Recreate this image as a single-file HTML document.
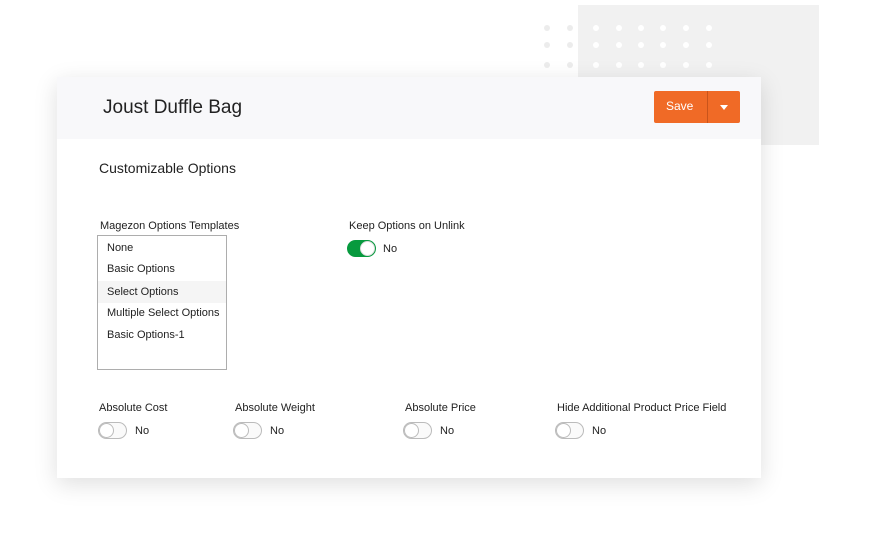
<!DOCTYPE html>
<html><head><meta charset="utf-8"><style>
*{margin:0;padding:0;box-sizing:border-box}
body{width:873px;height:539px;background:#fff;position:relative;overflow:hidden;font-family:"Liberation Sans",sans-serif;color:#222;font-size:11px}
.gray{position:absolute;left:578px;top:5px;width:241px;height:140px;background:#f1f1f1}
.dot{position:absolute;width:6px;height:6px;border-radius:50%}
.card{position:absolute;left:57px;top:77px;width:704px;height:401px;background:#fff;box-shadow:0 6px 22px rgba(0,0,0,0.13)}
.hdr{position:absolute;left:0;top:0;width:704px;height:62px;background:#f8f8fa}
.title{position:absolute;left:46px;top:20px;font-size:19px;color:#222}
.save{position:absolute;left:597px;top:14px;width:86px;height:32px;background:#f06a26;border-radius:2px;color:#fff;font-size:12px}
.save span{position:absolute;left:12px;top:8px}
.save .div{position:absolute;left:53px;top:0;width:1px;height:32px;background:#c9541b}
.save .tri{position:absolute;left:66px;top:14px;width:0;height:0;border-left:4px solid transparent;border-right:4px solid transparent;border-top:5px solid #fff}
.t{position:absolute;white-space:nowrap}
.sel{position:absolute;left:40px;top:158px;width:130px;height:135px;border:1px solid #adadad}
.sel div{position:absolute;left:9px;font-size:11px}
.tg{position:absolute;width:29px;height:17px;border-radius:9px;border:1px solid #bbb;background:#fafafa}
.tg::after{content:"";position:absolute;left:0;top:0;width:15px;height:15px;border-radius:50%;background:#fff;border:1px solid #bbb;box-sizing:border-box}
.on{background:#079a3e;border-color:#079a3e}
.on::after{left:12px;border-color:#ddd}
</style></head><body>
<div class="gray"></div>
<div class="dot" style="left:544px;top:25px;background:#ececec"></div><div class="dot" style="left:567px;top:25px;background:#ececec"></div>
<div class="dot" style="left:544px;top:42px;background:#ececec"></div><div class="dot" style="left:567px;top:42px;background:#ececec"></div>
<div class="dot" style="left:544px;top:62px;background:#ececec"></div><div class="dot" style="left:567px;top:62px;background:#ececec"></div>
<div class="dot" style="left:593px;top:25px;background:#fff"></div><div class="dot" style="left:616px;top:25px;background:#fff"></div><div class="dot" style="left:638px;top:25px;background:#fff"></div><div class="dot" style="left:660px;top:25px;background:#fff"></div><div class="dot" style="left:683px;top:25px;background:#fff"></div><div class="dot" style="left:706px;top:25px;background:#fff"></div>
<div class="dot" style="left:593px;top:42px;background:#fff"></div><div class="dot" style="left:616px;top:42px;background:#fff"></div><div class="dot" style="left:638px;top:42px;background:#fff"></div><div class="dot" style="left:660px;top:42px;background:#fff"></div><div class="dot" style="left:683px;top:42px;background:#fff"></div><div class="dot" style="left:706px;top:42px;background:#fff"></div>
<div class="dot" style="left:593px;top:62px;background:#fff"></div><div class="dot" style="left:616px;top:62px;background:#fff"></div><div class="dot" style="left:638px;top:62px;background:#fff"></div><div class="dot" style="left:660px;top:62px;background:#fff"></div><div class="dot" style="left:683px;top:62px;background:#fff"></div><div class="dot" style="left:706px;top:62px;background:#fff"></div>

<div class="card">
 <div class="hdr"></div>
 <div class="title">Joust Duffle Bag</div>
 <div class="save"><span>Save</span><div class="div"></div><div class="tri"></div></div>
 <div class="t" style="left:42px;top:83px;font-size:14px">Customizable Options</div>
 <div class="t" style="left:43px;top:143px">Magezon Options Templates</div>
 <div class="sel">
  <div style="top:6px">None</div>
  <div style="top:27px">Basic Options</div>
  <div style="top:45px;left:0;width:128px;height:22px;background:#f5f5f5"></div>
  <div style="top:50px">Select Options</div>
  <div style="top:71px">Multiple Select Options</div>
  <div style="top:93px">Basic Options-1</div>
 </div>
 <div class="t" style="left:292px;top:143px">Keep Options on Unlink</div>
 <div class="tg on" style="left:290px;top:163px"></div>
 <div class="t" style="left:326px;top:166px">No</div>

 <div class="t" style="left:42px;top:325px">Absolute Cost</div>
 <div class="tg" style="left:41px;top:345px"></div><div class="t" style="left:78px;top:348px">No</div>
 <div class="t" style="left:178px;top:325px">Absolute Weight</div>
 <div class="tg" style="left:176px;top:345px"></div><div class="t" style="left:213px;top:348px">No</div>
 <div class="t" style="left:348px;top:325px">Absolute Price</div>
 <div class="tg" style="left:346px;top:345px"></div><div class="t" style="left:383px;top:348px">No</div>
 <div class="t" style="left:500px;top:325px">Hide Additional Product Price Field</div>
 <div class="tg" style="left:498px;top:345px"></div><div class="t" style="left:535px;top:348px">No</div>
</div>
</body></html>
